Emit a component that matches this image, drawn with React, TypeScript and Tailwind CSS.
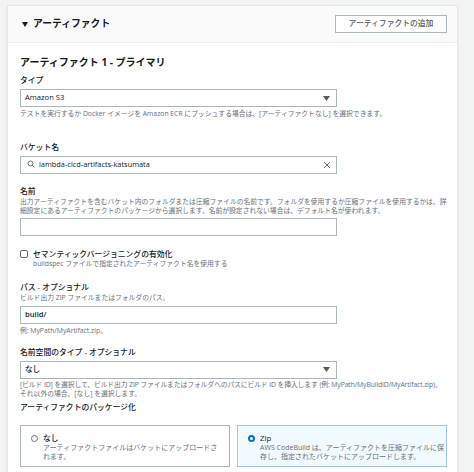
import React from 'react';

const font = { fontFamily: '"Open Sans", "Noto Sans CJK JP", sans-serif' };

function Label({ children, className = '' }: { children: React.ReactNode; className?: string }) {
  return <div className={`text-[7.8px] leading-[10px] font-medium text-[#16191f] ${className}`}>{children}</div>;
}

function Help({ children, className = '' }: { children: React.ReactNode; className?: string }) {
  return <div className={`text-[6.8px] leading-[9.5px] text-[#687078] ${className}`}>{children}</div>;
}

function Caret() {
  return (
    <svg width="7" height="5" viewBox="0 0 7 5" className="shrink-0">
      <path d="M0 0 H7 L3.5 5 Z" fill="#545b64" />
    </svg>
  );
}

function SelectBox({ value, className = '' }: { value: string; className?: string }) {
  return (
    <div className={`w-[317px] h-[18px] border border-[#aab7b8] bg-white flex items-center justify-between pl-[4px] pr-[6px] ${className}`}>
      <span className="text-[7.6px] font-medium text-[#16191f]">{value}</span>
      <Caret />
    </div>
  );
}

export default function App() {
  return (
    <div className="w-[474px] h-[472px] bg-[#f2f3f3] overflow-hidden" style={font}>
      <div className="ml-[7px] mt-[5px] w-[451px] h-[480px] bg-white border border-[#e4e7e8] shadow-[0_1px_1px_rgba(0,28,36,0.15)]">
        {/* header */}
        <div className="h-[37px] bg-[#fafafa] border-b border-[#eaeded] flex items-center justify-between pl-[14px] pr-[10px]">
          <div className="flex items-center gap-[5px]">
            <svg width="6" height="5" viewBox="0 0 6 5">
              <path d="M0 0 H6 L3 5 Z" fill="#16191f" />
            </svg>
            <span className="text-[9.8px] font-bold text-[#16191f]">アーティファクト</span>
          </div>
          <button className="h-[18px] w-[112px] border border-[#aab7b8] bg-white text-[7.8px] font-medium text-[#545b64] flex items-center justify-center">
            アーティファクトの追加
          </button>
        </div>

        {/* body */}
        <div className="pl-[12px] pr-[10px]">
          <div className="mt-[12px] text-[10px] leading-[14px] font-bold text-[#16191f]">アーティファクト 1 - プライマリ</div>

          <Label className="mt-[6px]">タイプ</Label>
          <SelectBox value="Amazon S3" className="mt-[4px]" />
          <Help className="mt-[2px]">テストを実行するか Docker イメージを Amazon ECR にプッシュする場合は、[アーティファクトなし] を選択できます。</Help>

          <Label className="mt-[23px]">バケット名</Label>
          <div className="mt-[4px] w-[317px] h-[18px] border border-[#aab7b8] bg-white flex items-center justify-between pl-[6px] pr-[5px]">
            <div className="flex items-center gap-[4px]">
              <svg width="8" height="8" viewBox="0 0 16 16" fill="none" stroke="#545b64" strokeWidth="1.8">
                <circle cx="7" cy="7" r="5" />
                <path d="M10.5 10.5 L14.5 14.5" />
              </svg>
              <span className="text-[7.4px] font-medium text-[#16191f]">lambda-cicd-artifacts-katsumata</span>
            </div>
            <svg width="8" height="8" viewBox="0 0 16 16" fill="none" stroke="#545b64" strokeWidth="1.8">
              <path d="M2 2 L14 14 M14 2 L2 14" />
            </svg>
          </div>

          <Label className="mt-[12px]">名前</Label>
          <Help className="mt-[1px]">
            出力アーティファクトを含むバケット内のフォルダまたは圧縮ファイルの名前です。フォルダを使用するか圧縮ファイルを使用するかは、詳細設定にあるアーティファクトのパッケージから選択します。名前が設定されない場合は、デフォルト名が使われます。
          </Help>
          <div className="mt-[2px] w-[317px] h-[18px] border border-[#aab7b8] bg-white" />

          <div className="mt-[13px] flex items-start gap-[5px]">
            <div className="mt-[1px] w-[8px] h-[8px] border border-[#687078] rounded-[2px] bg-white shrink-0" />
            <div>
              <Label>セマンティックバージョニングの有効化</Label>
              <Help className="leading-[9px]">buildspec ファイルで指定されたアーティファクト名を使用する</Help>
            </div>
          </div>

          <Label className="mt-[14px]">パス - オプショナル</Label>
          <Help className="mt-[1px] leading-[9px]">ビルド出力 ZIP ファイルまたはフォルダのパス。</Help>
          <div className="mt-[4px] w-[317px] h-[18px] border border-[#aab7b8] bg-white flex items-center pl-[4px]">
            <span className="text-[7.6px] font-semibold text-[#16191f]">build/</span>
          </div>
          <Help className="mt-[2px] leading-[9px]">例: MyPath/MyArtifact.zip。</Help>

          <Label className="mt-[12px]">名前空間のタイプ - オプショナル</Label>
          <SelectBox value="なし" className="mt-[4px]" />
          <Help className="mt-[1px]">
            <div className="whitespace-nowrap tracking-[-0.1px]">
              [ビルド ID] を選択して、ビルド出力 ZIP ファイルまたはフォルダへのパスにビルド ID を挿入します (例: MyPath/MyBuildID/MyArtifact.zip)。
            </div>
            <div>それ以外の場合、[なし] を選択します。</div>
          </Help>

          <Label className="mt-[3px]">アーティファクトのパッケージ化</Label>
          <div className="mt-[13px] grid grid-cols-2 gap-[7px]">
            <div className="h-[42px] border border-[#aab7b8] bg-white flex items-start gap-[5px] pl-[10px] pt-[7px]">
              <div className="mt-[2px] w-[7px] h-[7px] rounded-full border border-[#687078] bg-white shrink-0" />
              <div>
                <div className="text-[7.8px] leading-[10px] font-medium text-[#16191f]">なし</div>
                <div className="text-[7px] leading-[9px] text-[#687078] w-[176px]">アーティファクトファイルはバケットにアップロードされます。</div>
              </div>
            </div>
            <div className="h-[42px] border border-[#9cc9e6] bg-[#f1faff] flex items-start gap-[5px] pl-[10px] pt-[7px]">
              <div className="mt-[2px] w-[7px] h-[7px] rounded-full border-[2px] border-[#0073bb] bg-white shrink-0" />
              <div>
                <div className="text-[7.8px] leading-[10px] font-medium text-[#16191f]">Zip</div>
                <div className="text-[7px] leading-[9px] text-[#687078] w-[188px]">AWS CodeBuild は、アーティファクトを圧縮ファイルに保存し、指定されたバケットにアップロードします。</div>
              </div>
            </div>
          </div>
        </div>
      </div>
    </div>
  );
}
